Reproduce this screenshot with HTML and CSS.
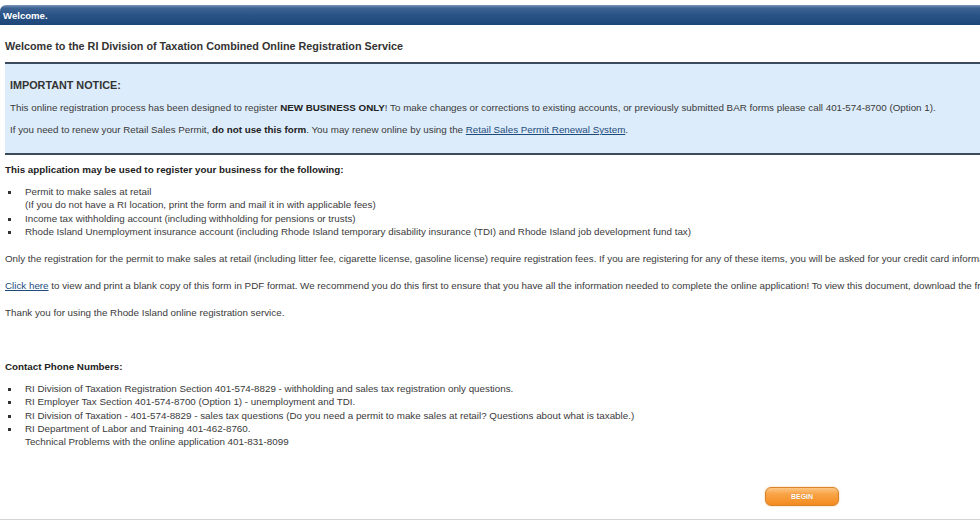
FILE: index.html
```html
<!DOCTYPE html>
<html lang="en">
<head>
    <meta charset="UTF-8">
    <meta name="viewport" content="width=device-width, initial-scale=1.0">
    <title>Welcome - Combined Online Registration</title>
    <link rel="stylesheet" href="styles.css">
</head>
<body>
    <div class="page">
        <div class="titlebar">Welcome.</div>

        <div class="content">
            <h1 class="intro-title">Welcome to the RI Division of Taxation Combined Online Registration Service</h1>

            <div class="notice">
                <h2>IMPORTANT NOTICE:</h2>
                <p>This online registration process has been designed to register <strong>NEW BUSINESS ONLY</strong>! To make changes or corrections to existing accounts, or previously submitted BAR forms please call 401-574-8700 (Option 1).</p>
                <p>If you need to renew your Retail Sales Permit, <strong>do not use this form</strong>. You may renew online by using the <a href="#">Retail Sales Permit Renewal System</a>.</p>
            </div>

            <h3 class="section-title">This application may be used to register your business for the following:</h3>
            <ul class="items">
                <li>Permit to make sales at retail<br>(If you do not have a RI location, print the form and mail it in with applicable fees)</li>
                <li>Income tax withholding account (including withholding for pensions or trusts)</li>
                <li>Rhode Island Unemployment insurance account (including Rhode Island temporary disability insurance (TDI) and Rhode Island job development fund tax)</li>
            </ul>

            <p>Only the registration for the permit to make sales at retail (including litter fee, cigarette license, gasoline license) require registration fees. If you are registering for any of these items, you will be asked for your credit card information at the end of the application.</p>
            <p><a href="#">Click here</a> to view and print a blank copy of this form in PDF format. We recommend you do this first to ensure that you have all the information needed to complete the online application! To view this document, download the free Adobe Reader.</p>
            <p>Thank you for using the Rhode Island online registration service.</p>

            <h3 class="section-title contact-title">Contact Phone Numbers:</h3>
            <ul class="items">
                <li>RI Division of Taxation Registration Section 401-574-8829 - withholding and sales tax registration only questions.</li>
                <li>RI Employer Tax Section 401-574-8700 (Option 1) - unemployment and TDI.</li>
                <li>RI Division of Taxation - 401-574-8829 - sales tax questions (Do you need a permit to make sales at retail? Questions about what is taxable.)</li>
                <li>RI Department of Labor and Training 401-462-8760.<br>Technical Problems with the online application 401-831-8099</li>
            </ul>

            <div class="actions">
                <button class="begin-btn">BEGIN</button>
            </div>
        </div>

        <div class="footer-line"></div>
    </div>
</body>
</html>
```

FILE: styles.css
```css
html, body {
    overflow: hidden;
}

body {
    margin: 0;
    padding-top: 5px;
    font-family: "Liberation Sans", Arial, sans-serif;
    font-size: 9.8px;
    color: #3a3a3a;
    background-color: white;
}

.page {
    width: 1400px;
}

.titlebar {
    height: 20px;
    line-height: 21px;
    padding-left: 3px;
    border-radius: 6px 0 0 0;
    background: linear-gradient(#7d98bb 0, #3d6393 15%, #2a5386 50%, #1e4679 100%);
    color: white;
    font-size: 9.6px;
    font-weight: bold;
}

.content {
    padding: 0 5px;
}

.content p,
.content li,
.content h1,
.content h2,
.content h3 {
    white-space: nowrap;
}

.intro-title {
    margin: 0;
    padding-top: 14px;
    font-size: 10.8px;
    line-height: 14px;
    color: #333;
}

.notice {
    margin-top: 9px;
    padding: 14px 5px 17px;
    background-color: #ddecfa;
    border-top: 2px solid #3a4b5e;
    border-bottom: 2px solid #3a4b5e;
}

.notice h2 {
    margin: 0;
    font-size: 10.8px;
    line-height: 14px;
    color: #333;
}

.notice p {
    margin: 9px 0 0;
    line-height: 13px;
}

.notice strong {
    color: #222;
}

a {
    color: #1d4c7c;
}

.section-title {
    margin: 8px 0 0;
    font-size: 9.8px;
    line-height: 13px;
    color: #222;
}

.contact-title {
    margin-top: 41px;
}

.items {
    margin: 9px 0 0;
    padding-left: 20px;
    list-style: none;
    line-height: 13.3px;
}

.items li::before {
    content: "";
    display: inline-block;
    width: 3px;
    height: 3px;
    margin-left: -17px;
    margin-right: 14px;
    vertical-align: middle;
    background-color: #333;
}

.content > p {
    margin: 14px 0 0;
    line-height: 13px;
}

.actions {
    margin-top: 38px;
    padding-left: 760px;
}

.begin-btn {
    width: 74px;
    height: 19px;
    padding: 0;
    border: 1px solid #d9832a;
    border-radius: 6px;
    background: linear-gradient(#fcc684 0, #f9a447 35%, #f38b1f 100%);
    box-shadow: 0 0 2px rgba(240, 150, 60, 0.6);
    color: white;
    font-family: "Liberation Sans", Arial, sans-serif;
    font-size: 7px;
    font-weight: bold;
    text-shadow: 0 0 1px rgba(200, 110, 30, 0.8);
    cursor: pointer;
}

.footer-line {
    margin-top: 13px;
    border-top: 1px solid #d4d4d4;
}
```
